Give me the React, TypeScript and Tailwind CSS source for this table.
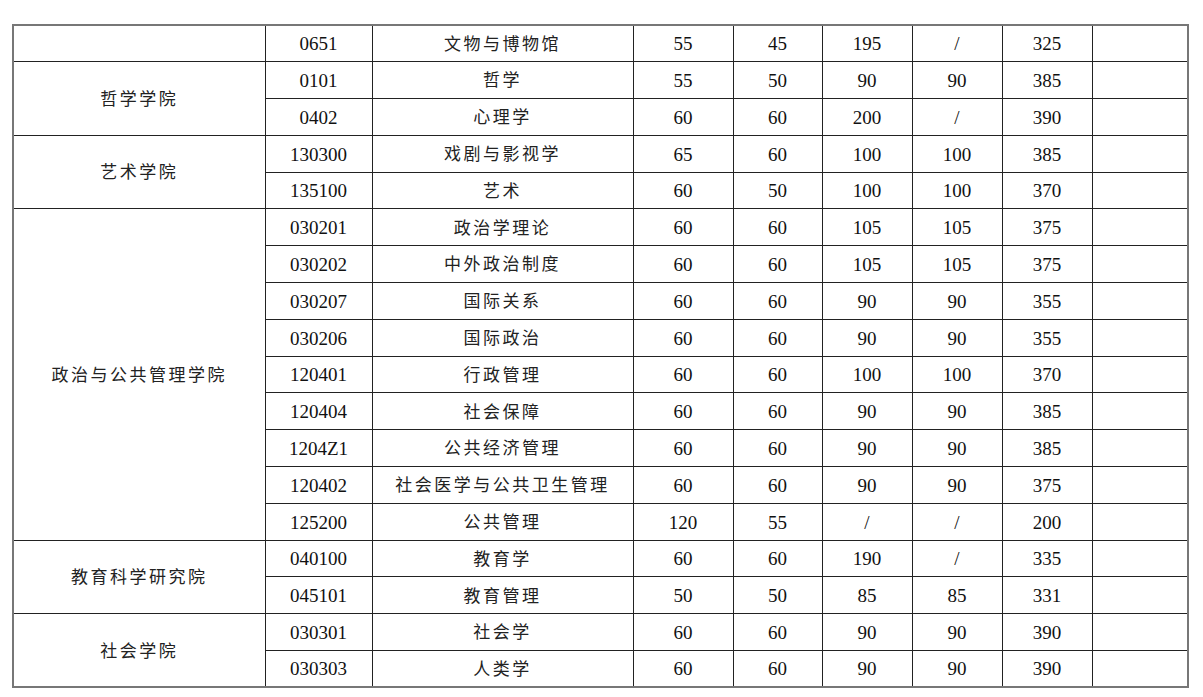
import React from "react";

type Row = { code: string; major: string; a: string; b: string; c: string; d: string; total: string };
type Group = { school: string; rows: Row[] };

const groups: Group[] = [
  { school: "", rows: [{ code: "0651", major: "文物与博物馆", a: "55", b: "45", c: "195", d: "/", total: "325" }] },
  {
    school: "哲学学院",
    rows: [
      { code: "0101", major: "哲学", a: "55", b: "50", c: "90", d: "90", total: "385" },
      { code: "0402", major: "心理学", a: "60", b: "60", c: "200", d: "/", total: "390" },
    ],
  },
  {
    school: "艺术学院",
    rows: [
      { code: "130300", major: "戏剧与影视学", a: "65", b: "60", c: "100", d: "100", total: "385" },
      { code: "135100", major: "艺术", a: "60", b: "50", c: "100", d: "100", total: "370" },
    ],
  },
  {
    school: "政治与公共管理学院",
    rows: [
      { code: "030201", major: "政治学理论", a: "60", b: "60", c: "105", d: "105", total: "375" },
      { code: "030202", major: "中外政治制度", a: "60", b: "60", c: "105", d: "105", total: "375" },
      { code: "030207", major: "国际关系", a: "60", b: "60", c: "90", d: "90", total: "355" },
      { code: "030206", major: "国际政治", a: "60", b: "60", c: "90", d: "90", total: "355" },
      { code: "120401", major: "行政管理", a: "60", b: "60", c: "100", d: "100", total: "370" },
      { code: "120404", major: "社会保障", a: "60", b: "60", c: "90", d: "90", total: "385" },
      { code: "1204Z1", major: "公共经济管理", a: "60", b: "60", c: "90", d: "90", total: "385" },
      { code: "120402", major: "社会医学与公共卫生管理", a: "60", b: "60", c: "90", d: "90", total: "375" },
      { code: "125200", major: "公共管理", a: "120", b: "55", c: "/", d: "/", total: "200" },
    ],
  },
  {
    school: "教育科学研究院",
    rows: [
      { code: "040100", major: "教育学", a: "60", b: "60", c: "190", d: "/", total: "335" },
      { code: "045101", major: "教育管理", a: "50", b: "50", c: "85", d: "85", total: "331" },
    ],
  },
  {
    school: "社会学院",
    rows: [
      { code: "030301", major: "社会学", a: "60", b: "60", c: "90", d: "90", total: "390" },
      { code: "030303", major: "人类学", a: "60", b: "60", c: "90", d: "90", total: "390" },
    ],
  },
];

const cjk = "font-['Liberation_Serif','Noto_Sans_CJK_SC',serif] text-[17px] tracking-[2.5px] text-[#222] pt-[2px]";
const num = "font-['Liberation_Serif','Noto_Sans_CJK_SC',serif] text-[19px] text-[#111] pt-[2px]";
const cell = "border border-[#222] text-center align-middle p-0";

export default function App() {
  return (
    <div className="min-h-screen bg-white pt-[24px] pl-[12px]">
      <table className="table-fixed border-collapse border-2 border-[#777] w-[1175px]">
        <colgroup>
          <col className="w-[252px]" />
          <col className="w-[107px]" />
          <col className="w-[261px]" />
          <col className="w-[100px]" />
          <col className="w-[89px]" />
          <col className="w-[90px]" />
          <col className="w-[90px]" />
          <col className="w-[90px]" />
          <col className="w-[96px]" />
        </colgroup>
        <tbody>
          {groups.map((g, gi) =>
            g.rows.map((r, ri) => (
              <tr key={`${gi}-${ri}`} className="h-[36.8px]">
                {ri === 0 && (
                  <td rowSpan={g.rows.length} className={`${cell} ${cjk} border-l-2 border-l-[#777]`}>
                    {g.school}
                  </td>
                )}
                <td className={`${cell} ${num}`}>{r.code}</td>
                <td className={`${cell} ${cjk}`}>{r.major}</td>
                <td className={`${cell} ${num}`}>{r.a}</td>
                <td className={`${cell} ${num}`}>{r.b}</td>
                <td className={`${cell} ${num}`}>{r.c}</td>
                <td className={`${cell} ${num}`}>{r.d}</td>
                <td className={`${cell} ${num}`}>{r.total}</td>
                <td className={`${cell} border-r-2 border-r-[#777]`}></td>
              </tr>
            ))
          )}
        </tbody>
      </table>
    </div>
  );
}
